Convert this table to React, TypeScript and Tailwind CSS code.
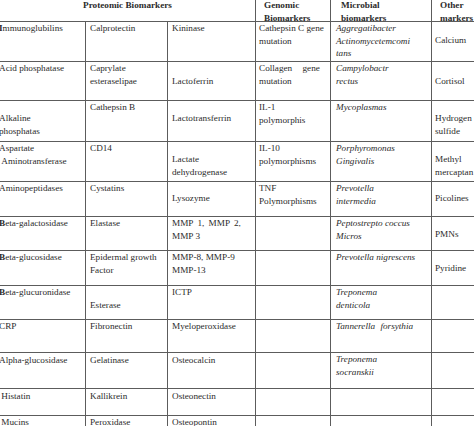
import React from 'react'

type Cell = { t?: React.ReactNode; pt?: string }
type Row = { h: string; cells: Cell[] }

const LOW = 'pt-[11px]'

// rows of the biomarker table, lines broken the way the source table wraps them
const rows: Row[] = [
  {
    h: 'h-[40px]',
    cells: [
      { t: <><b>I</b>mmunoglubilins</> },
      { t: 'Calprotectin' },
      { t: 'Kininase' },
      { t: <>Cathepsin C gene<br />mutation</> },
      { t: <>Aggregatibacter<br />Actinomycetemcomi<br />tans</> },
      { t: 'Calcium', pt: 'pt-[12px]' },
    ],
  },
  {
    h: 'h-[39px]',
    cells: [
      { t: 'Acid phosphatase' },
      { t: <>Caprylate<br />esteraselipae</> },
      { t: 'Lactoferrin', pt: 'pt-[13px]' },
      { t: <><span className="[word-spacing:8px]">Collagen gene</span><br />mutation</> },
      { t: <>Campylobactr<br />rectus</> },
      { t: 'Cortisol', pt: 'pt-[13px]' },
    ],
  },
  {
    h: 'h-[41px]',
    cells: [
      { t: <>Alkaline<br />phosphatas</>, pt: LOW },
      { t: 'Cathepsin B' },
      { t: 'Lactotransferrin', pt: LOW },
      { t: <>IL-1<br />polymorphis</> },
      { t: 'Mycoplasmas' },
      { t: <>Hydrogen<br />sulfide</>, pt: LOW },
    ],
  },
  {
    h: 'h-[40px]',
    cells: [
      { t: <>Aspartate<br />&nbsp;Aminotransferase</> },
      { t: 'CD14' },
      { t: <>Lactate<br />dehydrogenase</>, pt: LOW },
      { t: <>IL-10<br />polymorphisms</> },
      { t: <>Porphyromonas<br />Gingivalis</> },
      { t: <>Methyl<br />mercaptan</>, pt: LOW },
    ],
  },
  {
    h: 'h-[35px]',
    cells: [
      { t: 'Aminopeptidases' },
      { t: 'Cystatins' },
      { t: 'Lysozyme', pt: 'pt-[10px]' },
      { t: <>TNF<br />Polymorphisms</> },
      { t: <>Prevotella<br />intermedia</> },
      { t: 'Picolines', pt: 'pt-[10px]' },
    ],
  },
  {
    h: 'h-[34px]',
    cells: [
      { t: <><b>B</b>eta-galactosidase</> },
      { t: 'Elastase' },
      { t: <><span className="[word-spacing:2px]">MMP 1, MMP 2,</span><br />MMP 3</> },
      {},
      { t: <>Peptostrepto coccus<br />Micros</> },
      { t: 'PMNs', pt: LOW },
    ],
  },
  {
    h: 'h-[35px]',
    cells: [
      { t: <><b>B</b>eta-glucosidase</> },
      { t: <>Epidermal growth<br />Factor</> },
      { t: <>MMP-8, MMP-9<br />MMP-13</> },
      {},
      { t: 'Prevotella nigrescens' },
      { t: 'Pyridine', pt: LOW },
    ],
  },
  {
    h: 'h-[34px]',
    cells: [
      { t: <><b>B</b>eta-glucuronidase</> },
      { t: 'Esterase', pt: 'pt-[13px]' },
      { t: 'ICTP' },
      {},
      { t: <>Treponema<br />denticola</> },
      {},
    ],
  },
  {
    h: 'h-[33px]',
    cells: [
      { t: 'CRP' },
      { t: 'Fibronectin' },
      { t: 'Myeloperoxidase' },
      {},
      { t: <span className="[word-spacing:3px]">Tannerella forsythia</span> },
      {},
    ],
  },
  {
    h: 'h-[36px]',
    cells: [
      { t: 'Alpha-glucosidase', pt: 'pt-[1px]' },
      { t: 'Gelatinase', pt: 'pt-[1px]' },
      { t: 'Osteocalcin', pt: 'pt-[1px]' },
      {},
      { t: <>Treponema<br />socranskii</> },
      {},
    ],
  },
  {
    h: 'h-[27px]',
    cells: [
      { t: <>&nbsp;Histatin</>, pt: 'pt-[1px]' },
      { t: 'Kallikrein', pt: 'pt-[1px]' },
      { t: 'Osteonectin', pt: 'pt-[1px]' },
      {},
      {},
      {},
    ],
  },
  {
    h: 'h-[30px]',
    cells: [
      { t: <>&nbsp;Mucins</> },
      { t: 'Peroxidase' },
      { t: 'Osteopontin' },
      {},
      {},
      {},
    ],
  },
]

const PAD = ['pl-[5px]', 'pl-[4px]', 'pl-[4px]', 'pl-[3px]', 'pl-[5px]', 'pl-[3px]']

export default function App() {
  return (
    <div className="w-[474px] h-[426px] overflow-hidden bg-white text-[#2b2b2b]">
      <div className="-ml-[6px] -mt-[2px] w-[498px] font-['Liberation_Serif','Times_New_Roman',serif] text-[9.2px] leading-[12.5px]">
        {/* header */}
        <div className="grid grid-cols-[262px_75px_101px_60px] h-[24px] border-b border-[#5c5c5c] font-bold">
          <div className="pl-[6px] pt-[1px] text-center border-r border-[#5c5c5c]">Proteomic Biomarkers</div>
          <div className="pl-[8px] pt-[1px] border-r border-[#5c5c5c]">Genomic<br />Biomarkers</div>
          <div className="pl-[10px] pt-[1px] border-r border-[#5c5c5c]">Microbial<br />biomarkers</div>
          <div className="pl-[8px] pt-[1px]">Other<br />markers</div>
        </div>

        {rows.map((row, i) => (
          <div
            key={i}
            className={`grid grid-cols-[92px_82px_88px_75px_101px_60px] border-b border-[#5c5c5c] ${row.h}`}
          >
            {row.cells.map((c, j) => (
              <div
                key={j}
                className={`whitespace-nowrap ${PAD[j]} ${c.pt ?? 'pt-0'} ${j < 5 ? 'border-r border-[#5c5c5c]' : ''} ${j === 4 ? 'italic' : ''}`}
              >
                {c.t}
              </div>
            ))}
          </div>
        ))}
      </div>
    </div>
  )
}
